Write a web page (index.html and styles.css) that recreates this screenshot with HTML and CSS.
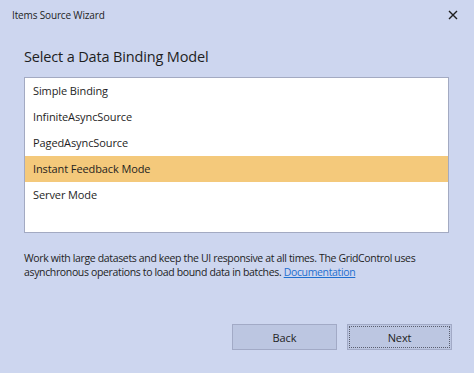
FILE: index.html
```html
<!DOCTYPE html>
<html>
<head>
<meta charset="utf-8">
<link rel="stylesheet" href="styles.css">
</head>
<body>
<div class="window">
  <div class="titlebar">
    <span class="title">Items Source Wizard</span>
    <svg class="close" width="10" height="10" viewBox="0 0 10 10"><path d="M1 1 L9 9 M9 1 L1 9" stroke="#1e1e1e" stroke-width="1.4" fill="none"/></svg>
  </div>
  <div class="content">
    <h1 class="heading">Select a Data Binding Model</h1>
    <ul class="list">
      <li class="item">Simple Binding</li>
      <li class="item">InfiniteAsyncSource</li>
      <li class="item">PagedAsyncSource</li>
      <li class="item selected">Instant Feedback Mode</li>
      <li class="item">Server Mode</li>
    </ul>
    <p class="desc">Work with large datasets and keep the UI responsive at all times. The GridControl uses asynchronous operations to load bound data in batches. <a class="link" href="#">Documentation</a></p>
  </div>
  <div class="footer">
    <button class="btn">Back</button>
    <button class="btn focused"><span class="focus">Next</span></button>
  </div>
</div>
</body>
</html>
```
FILE: styles.css
```css
html, body {
  margin: 0;
  padding: 0;
}
body {
  background: #cdd6ef;
  font-family: "Open Sans", "Noto Sans", sans-serif;
  color: #1e1e1e;
}
.window {
  width: 474px;
  height: 373px;
  display: flex;
  flex-direction: column;
  box-sizing: border-box;
}
.titlebar {
  height: 30px;
  display: flex;
  align-items: center;
  justify-content: space-between;
  padding: 0 16px 0 12px;
  box-sizing: border-box;
}
.title {
  font-size: 10px;
  letter-spacing: -0.15px;
}
.close {
  display: block;
}
.content {
  padding: 0 25px 0 24px;
  flex: 1;
}
.heading {
  margin: 15px 0 0 0;
  font-size: 14.5px;
  font-weight: 400;
  line-height: 24px;
  height: 24px;
  letter-spacing: -0.15px;
}
.list {
  list-style: none;
  margin: 8px 0 0 0;
  padding: 0;
  height: 156px;
  box-sizing: border-box;
  background: #ffffff;
  border: 1px solid #a3aac2;
}
.item {
  height: 26px;
  line-height: 26px;
  padding-left: 8px;
  font-size: 11px;
  letter-spacing: -0.1px;
}
.selected {
  background: #f4c97b;
}
.desc {
  margin: 18px 0 0 0;
  font-size: 10.5px;
  line-height: 14px;
  letter-spacing: -0.35px;
}
.link {
  color: #1f6fd0;
  text-decoration: underline;
}
.footer {
  display: flex;
  justify-content: flex-end;
  gap: 10px;
  padding: 0 22px 23px 0;
}
.btn {
  width: 105px;
  height: 26px;
  background: #bcc6e1;
  border: 1px solid #a2aac6;
  font-family: "Open Sans", "Noto Sans", sans-serif;
  font-size: 11px;
  letter-spacing: -0.1px;
  color: #1e1e1e;
  padding: 1px;
  box-sizing: border-box;
  display: flex;
  align-items: stretch;
  justify-content: center;
}
.focus {
  flex: 1;
  border: 1px dotted #5a5f70;
  display: flex;
  align-items: center;
  justify-content: center;
}
.btn:first-child {
  align-items: center;
}
```
